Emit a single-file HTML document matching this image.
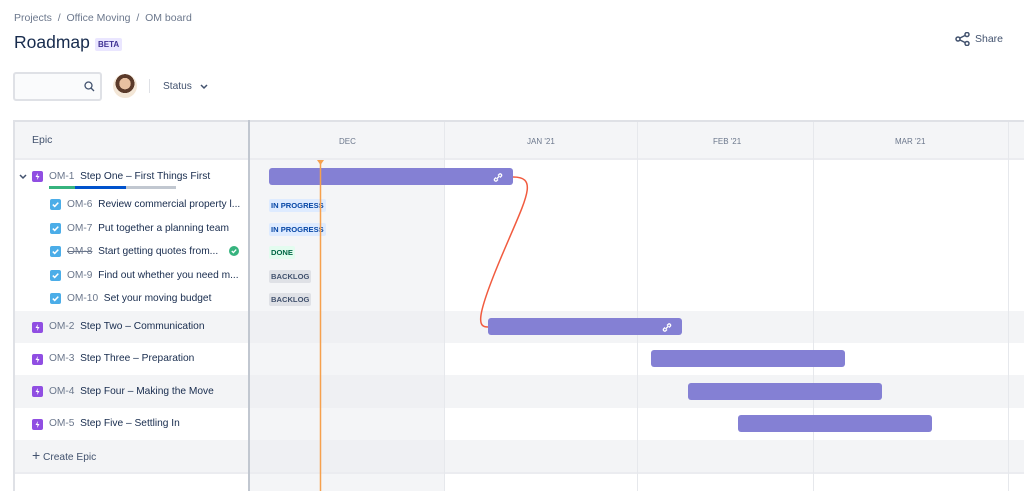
<!DOCTYPE html>
<html><head><meta charset="utf-8"><style>
*{box-sizing:border-box;margin:0;padding:0}
body{width:1024px;height:491px;overflow:hidden;background:#fff;font-family:"Liberation Sans",sans-serif;color:#172b4d;position:relative}
.a{position:absolute}
.t{font-size:10.2px;white-space:nowrap}
.key{color:#6b778c}
.ep{width:11px;height:11px;background:#904ee2;border-radius:2px}
.cb{width:11px;height:11px;background:#4bade8;border-radius:2px}
.lz{font-size:7.6px;font-weight:bold;padding:2px 2px;border-radius:2px}
.bar{background:#8480d4;border-radius:3px;height:17px}
.mon{font-size:8px;color:#6b778c;top:137px}
</style></head><body>
<svg width="0" height="0" style="position:absolute"><defs>
<symbol id="bolt" viewBox="0 0 11 11"><path d="M6 2 3.5 6H5.5L5 9 7.5 5H5.5z" fill="#fff"/></symbol>
<symbol id="chk" viewBox="0 0 11 11"><path d="M2.8 5.6 4.7 7.4 8.3 3.6" fill="none" stroke="#fff" stroke-width="1.5"/></symbol>
</defs></svg>
<div class="a t" style="left:14px;top:12px;color:#6b778c;font-size:10.5px">Projects &nbsp;/&nbsp; Office Moving &nbsp;/&nbsp; OM board</div>
<div class="a" style="left:14px;top:32px;font-size:17.5px;color:#172b4d">Roadmap</div>
<div class="a" style="left:95px;top:38px;font-size:8px;font-weight:bold;color:#403294;background:#eae6ff;padding:2px 3px;border-radius:2px">BETA</div>
<svg class="a" style="left:955px;top:32px" width="16" height="14" viewBox="0 0 16 14"><g fill="none" stroke="#42526e" stroke-width="1.5"><circle cx="3" cy="7" r="2"/><circle cx="12" cy="2.5" r="2"/><circle cx="12" cy="11.5" r="2"/><path d="M5 6 10 3.5M5 8 10 10.5"/></g></svg>
<div class="a t" style="left:975px;top:33px;color:#42526e;font-size:10.5px">Share</div>
<div class="a" style="left:13px;top:72px;width:89px;height:29px;border:2px solid #dfe1e6;border-radius:3px;background:#fafbfc"></div>
<svg class="a" style="left:84px;top:81px" width="11" height="11"><circle cx="4.5" cy="4.5" r="3.5" fill="none" stroke="#42526e" stroke-width="1.3"/><path d="M7 7 10 10" stroke="#42526e" stroke-width="1.3"/></svg>
<div class="a" style="left:113px;top:74px;width:24px;height:24px;border-radius:50%;background:radial-gradient(circle at 50% 40%,#e8c0a0 0 30%,#5a3a2a 31% 50%,#f3e6d6 51%)"></div>
<div class="a" style="left:149px;top:79px;width:1px;height:14px;background:#dfe1e6"></div>
<div class="a t" style="left:163px;top:81px;color:#42526e">Status</div>
<svg class="a" style="left:200px;top:84px" width="8" height="6"><path d="M1 1 4 4 7 1" fill="none" stroke="#42526e" stroke-width="1.5"/></svg>

<div class="a" style="left:13px;top:120px;width:1011px;height:371px;border-left:2px solid #dfe1e6;border-top:2px solid #dfe1e6"></div>
<div class="a" style="left:15px;top:122px;width:1009px;height:38px;background:#f4f5f7;border-bottom:2px solid #ebecf0"></div>
<div class="a" style="left:250px;top:160px;width:194px;height:331px;background:#f4f5f7"></div>
<div class="a" style="left:15px;top:311px;width:1009px;height:32px;background:rgba(235,236,240,.6)"></div>
<div class="a" style="left:15px;top:375px;width:1009px;height:33px;background:rgba(235,236,240,.6)"></div>
<div class="a" style="left:15px;top:440px;width:1009px;height:32px;background:rgba(235,236,240,.6)"></div>
<div class="a" style="left:15px;top:472px;width:1009px;height:2px;background:#ebecf0"></div>
<div class="a" style="left:248px;top:120px;width:2px;height:371px;background:#c1c7d0"></div>
<div class="a" style="left:444px;top:122px;width:1px;height:369px;background:#e6e8ec"></div>
<div class="a" style="left:637px;top:122px;width:1px;height:369px;background:#e6e8ec"></div>
<div class="a" style="left:813px;top:122px;width:1px;height:369px;background:#e6e8ec"></div>
<div class="a" style="left:1008px;top:122px;width:1px;height:369px;background:#e6e8ec"></div>
<div class="a t" style="left:32px;top:134px;color:#42526e;font-size:10.5px">Epic</div>
<div class="a mon" style="left:339px">DEC</div>
<div class="a mon" style="left:527px">JAN '21</div>
<div class="a mon" style="left:713px">FEB '21</div>
<div class="a mon" style="left:895px">MAR '21</div>

<svg class="a" style="left:19px;top:174px" width="8" height="6"><path d="M1 1 4 4 7 1" fill="none" stroke="#42526e" stroke-width="1.5"/></svg>
<svg class="a ep" style="left:32px;top:171px"><use href="#bolt"/></svg>
<div class="a t" style="left:49px;top:171px"><span class="key">OM-1</span>&nbsp; Step One – First Things First</div>
<div class="a" style="left:49px;top:186px;width:26px;height:3px;background:#36b37e"></div>
<div class="a" style="left:75px;top:186px;width:51px;height:3px;background:#0052cc"></div>
<div class="a" style="left:126px;top:186px;width:50px;height:3px;background:#c1c7d0"></div>

<svg class="a cb" style="left:50px;top:199px"><use href="#chk"/></svg><div class="a t" style="left:67px;top:199px"><span class="key">OM-6</span>&nbsp; Review commercial property l...</div>
<svg class="a cb" style="left:50px;top:223px"><use href="#chk"/></svg><div class="a t" style="left:67px;top:223px"><span class="key">OM-7</span>&nbsp; Put together a planning team</div>
<svg class="a cb" style="left:50px;top:246px"><use href="#chk"/></svg><div class="a t" style="left:67px;top:246px"><span class="key" style="text-decoration:line-through">OM-8</span>&nbsp; Start getting quotes from...</div>
<svg class="a" style="left:229px;top:246px" width="10" height="10"><circle cx="5" cy="5" r="5" fill="#36b37e"/><path d="M2.8 5 4.4 6.6 7.2 3.6" fill="none" stroke="#fff" stroke-width="1.3"/></svg>
<svg class="a cb" style="left:50px;top:270px"><use href="#chk"/></svg><div class="a t" style="left:67px;top:270px"><span class="key">OM-9</span>&nbsp; Find out whether you need m...</div>
<svg class="a cb" style="left:50px;top:293px"><use href="#chk"/></svg><div class="a t" style="left:67px;top:293px"><span class="key">OM-10</span>&nbsp; Set your moving budget</div>

<svg class="a ep" style="left:32px;top:322px"><use href="#bolt"/></svg><div class="a t" style="left:49px;top:321px"><span class="key">OM-2</span>&nbsp; Step Two – Communication</div>
<svg class="a ep" style="left:32px;top:354px"><use href="#bolt"/></svg><div class="a t" style="left:49px;top:353px"><span class="key">OM-3</span>&nbsp; Step Three – Preparation</div>
<svg class="a ep" style="left:32px;top:386px"><use href="#bolt"/></svg><div class="a t" style="left:49px;top:386px"><span class="key">OM-4</span>&nbsp; Step Four – Making the Move</div>
<svg class="a ep" style="left:32px;top:419px"><use href="#bolt"/></svg><div class="a t" style="left:49px;top:418px"><span class="key">OM-5</span>&nbsp; Step Five – Settling In</div>
<div class="a t" style="left:32px;top:450px;color:#42526e"><span style="font-size:14px;line-height:10px">+</span> Create Epic</div>

<div class="a lz" style="left:269px;top:199px;background:#deebff;color:#0747a6">IN PROGRESS</div>
<div class="a lz" style="left:269px;top:223px;background:#deebff;color:#0747a6">IN PROGRESS</div>
<div class="a lz" style="left:269px;top:246px;background:#e3fcef;color:#006644">DONE</div>
<div class="a lz" style="left:269px;top:270px;background:#dfe1e6;color:#42526e">BACKLOG</div>
<div class="a lz" style="left:269px;top:293px;background:#dfe1e6;color:#42526e">BACKLOG</div>

<div class="a bar" style="left:269px;top:168px;width:244px"></div>
<div class="a bar" style="left:488px;top:318px;width:194px"></div>
<div class="a bar" style="left:651px;top:350px;width:194px"></div>
<div class="a bar" style="left:688px;top:383px;width:194px"></div>
<div class="a bar" style="left:738px;top:415px;width:194px"></div>
<svg class="a" style="left:0;top:0" width="1024" height="491">
<g fill="none" stroke="#fff" stroke-width="1.3"><path d="M496 177.5 l-1.5 1.5 a1.5 1.5 0 0 0 2 2 l1.5 -1.5 M498 175.5 l1.5 -1.5 a1.5 1.5 0 0 1 2 2 l-1.5 1.5 M496.5 179 l3 -3"/>
<path d="M665 327.5 l-1.5 1.5 a1.5 1.5 0 0 0 2 2 l1.5 -1.5 M667 325.5 l1.5 -1.5 a1.5 1.5 0 0 1 2 2 l-1.5 1.5 M665.5 329 l3 -3"/></g>
<path d="M513 177 C540 177 525 200 500 260 C475 320 478 327 488 327" fill="none" stroke="#f15b3f" stroke-width="1.5"/>
<line x1="320.5" y1="162" x2="320.5" y2="491" stroke="#f6a04d" stroke-width="1.5"/><path d="M317 160 324 160 320.5 165z" fill="#f6a04d"/></svg>
</body></html>
